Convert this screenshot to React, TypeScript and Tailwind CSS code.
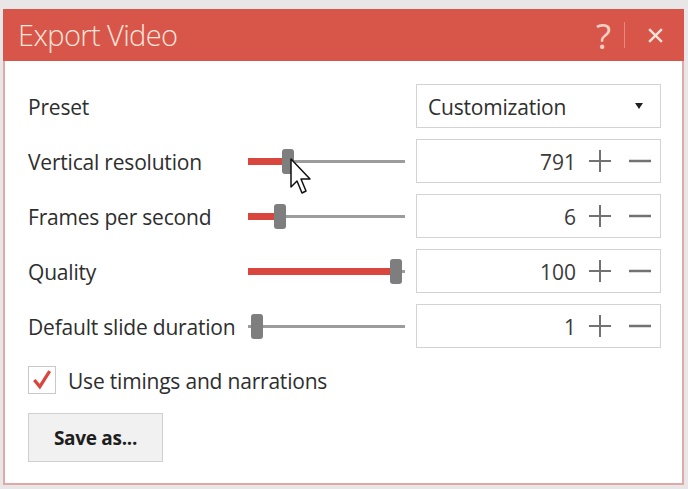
import React from "react";

const font = { fontFamily: '"Open Sans", "Noto Sans", "Liberation Sans", sans-serif' };

function Slider({ pos, fill }: { pos: number; fill: boolean }) {
  return (
    <div className="relative h-[44px] w-[157px] shrink-0">
      <div className="absolute left-0 right-0 top-[21px] h-[3px] bg-[#9c9c9c]" />
      {fill && (
        <div
          className="absolute left-0 top-[19px] h-[7px] bg-[#d9463e]"
          style={{ width: pos + 2 }}
        />
      )}
      <div
        className="absolute top-[10px] h-[25px] w-[12px] rounded-[3px] bg-[#7e7e7e]"
        style={{ left: pos }}
      />
    </div>
  );
}

function Stepper({ value }: { value: string }) {
  return (
    <div className="flex h-[44px] w-[245px] shrink-0 items-center justify-end border border-[#d3d3d3] bg-white pr-[8px]">
      <span className="mr-[12px] pt-[4px] text-[21px] text-[#3a3a3a]">{value}</span>
      <svg width="24" height="24" viewBox="0 0 24 24" className="mr-[16px]">
        <path d="M12 1 V23 M1 12 H23" stroke="#727272" strokeWidth="2" fill="none" />
      </svg>
      <svg width="24" height="24" viewBox="0 0 24 24">
        <path d="M1 12 H23" stroke="#727272" strokeWidth="2.5" fill="none" />
      </svg>
    </div>
  );
}

function Row({ label, children }: { label: string; children: React.ReactNode }) {
  return (
    <div className="flex h-[44px] items-center">
      <div className="w-[220px] shrink-0 pt-[4px] text-[21px] tracking-[-0.2px] text-[#2e2e2e]">{label}</div>
      {children}
    </div>
  );
}

export default function App() {
  return (
    <div className="h-[489px] w-[688px] bg-[#e8e6e6] pl-[3px] pr-[4px] pt-[9px]" style={font}>
      <div className="relative flex h-[476px] flex-col border-2 border-t-0 border-[#e0a8a8] bg-white">
        <div className="-mx-[2px] flex h-[52px] items-center bg-[#d8554a] pl-[15px] pr-[20px]">
          <span className="text-[29px] font-light tracking-[-0.6px] text-[#fbe6da]">Export Video</span>
          <span className="ml-auto text-[35px] leading-none text-[#f6cfc4]">?</span>
          <div className="ml-[13px] mr-[22px] h-[26px] w-px bg-[#e8897f]" />
          <svg width="17" height="17" viewBox="0 0 16 16">
            <path d="M2 2 L14 14 M14 2 L2 14" stroke="#fbe1d6" strokeWidth="2.3" fill="none" />
          </svg>
        </div>

        <div className="flex flex-col gap-[11px] pl-[23px] pr-[21px] pt-[23px]">
          <div className="flex h-[44px] items-center">
            <div className="pt-[4px] text-[21px] tracking-[-0.2px] text-[#2e2e2e]">Preset</div>
            <div className="ml-auto flex h-[44px] w-[245px] items-center border border-[#d3d3d3] pl-[11px] pr-[17px]">
              <span className="pt-[4px] text-[21px] tracking-[-0.2px] text-[#2e2e2e]">Customization</span>
              <svg width="8" height="6" viewBox="0 0 8 6" className="ml-auto">
                <path d="M0 0 H8 L4 6 Z" fill="#222" />
              </svg>
            </div>
          </div>
          <Row label="Vertical resolution">
            <Slider pos={34} fill />
            <div className="ml-auto">
              <Stepper value="791" />
            </div>
          </Row>
          <Row label="Frames per second">
            <Slider pos={26} fill />
            <div className="ml-auto">
              <Stepper value="6" />
            </div>
          </Row>
          <Row label="Quality">
            <Slider pos={142} fill />
            <div className="ml-auto">
              <Stepper value="100" />
            </div>
          </Row>
          <Row label="Default slide duration">
            <Slider pos={3} fill={false} />
            <div className="ml-auto">
              <Stepper value="1" />
            </div>
          </Row>

          <div className="mt-[5px] flex h-[32px] items-center gap-[12px]">
            <div className="flex h-[28px] w-[28px] items-center justify-center border border-[#c9c9c9] bg-white">
              <svg width="22" height="22" viewBox="0 0 20 20">
                <path d="M3 10 L8 16 L17 2" stroke="#d9463e" strokeWidth="3" fill="none" />
              </svg>
            </div>
            <span className="pt-[3px] text-[21px] tracking-[-0.2px] text-[#2e2e2e]">Use timings and narrations</span>
          </div>

          <div className="mt-[6px]">
            <button className="h-[49px] w-[135px] border border-[#d0d0d0] bg-[#f1f1f1] pt-[2px] text-[19px] font-bold tracking-[-0.3px] text-[#1e1e1e]">
              Save as...
            </button>
          </div>
        </div>

        <svg
          className="absolute left-[284px] top-[148px]"
          width="24"
          height="40"
          viewBox="0 0 24 40"
        >
          <path
            d="M2 2 L2 30 L8 24 L13 36 L17 34 L12 22 L21 22 Z"
            fill="#ffffff"
            stroke="#111"
            strokeWidth="1.5"
            strokeLinejoin="round"
          />
        </svg>
      </div>
    </div>
  );
}
